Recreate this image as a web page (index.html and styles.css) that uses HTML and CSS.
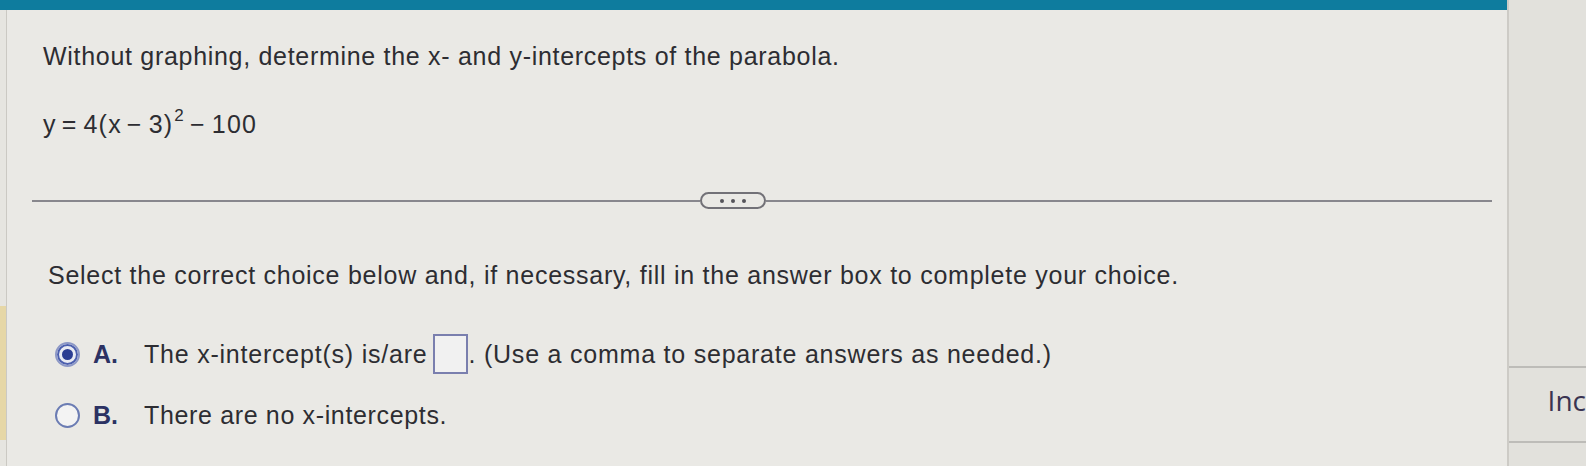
FILE: index.html
```html
<!DOCTYPE html>
<html>
<head>
<meta charset="utf-8">
<link rel="stylesheet" href="styles.css">
</head>
<body>
<div class="screen">
  <div class="maincol">
    <div class="topbar"></div>
    <div class="mainrow">
      <div class="leftstrip"><div class="strip-mark"></div></div>
      <div class="panel">
        <p class="title">Without graphing, determine the x- and y-intercepts of the parabola.</p>
        <p class="equation">y<span class="op">=</span>4(x<span class="op">−</span>3)<sup class="sup">2</sup><span class="op">−</span>100</p>
        <div class="separator">
          <div class="rule"></div>
          <div class="pill"><span class="dot"></span><span class="dot"></span><span class="dot"></span></div>
          <div class="rule rule-right"></div>
        </div>
        <p class="instruction">Select the correct choice below and, if necessary, fill in the answer box to complete your choice.</p>
        <div class="choice choice-a">
          <span class="radio radio-on"><span class="radio-dot"></span></span>
          <span class="label">A.</span>
          <span class="text">The x-intercept(s) is/are</span>
          <span class="answer-box"></span>
          <span class="text">. (Use a comma to separate answers as needed.)</span>
        </div>
        <div class="choice choice-b">
          <span class="radio"></span>
          <span class="label">B.</span>
          <span class="text">There are no x-intercepts.</span>
        </div>
      </div>
    </div>
  </div>
  <div class="sidecol">
    <div class="side-top"></div>
    <div class="side-item">Inc</div>
    <div class="side-bottom"></div>
  </div>
</div>
</body>
</html>
```

FILE: styles.css
```css
* { box-sizing: border-box; }
html, body {
  margin: 0;
  padding: 0;
  width: 1586px;
  height: 466px;
  overflow: hidden;
  background: #e3e2dd;
  font-family: "Liberation Sans", Arial, sans-serif;
  color: #2d2d32;
}
.screen {
  display: flex;
  width: 1586px;
  height: 466px;
}
.maincol {
  width: 1512px;
  display: flex;
  flex-direction: column;
}
.topbar {
  height: 10px;
  background: #0e7c9e;
}
.mainrow {
  flex: 1;
  display: flex;
}
.leftstrip {
  width: 7px;
  background: #e6e5e0;
  border-right: 1px solid #cbc9c3;
  padding-top: 296px;
}
.strip-mark {
  height: 134px;
  background: #e6d7a6;
}
.panel {
  flex: 1;
  background: #eae9e5;
  padding: 32px 0 0 36px;
}
.title, .equation, .instruction {
  margin: 0;
  font-size: 25px;
  line-height: 28px;
  letter-spacing: 0.7px;
}
.equation {
  margin-top: 40px;
  letter-spacing: 1.2px;
}
.op { padding: 0 6px 0 5px; }
.sup {
  font-size: 17px;
  vertical-align: 0;
  position: relative;
  top: -12px;
  line-height: 0;
  padding-left: 1px;
}
.separator {
  margin: 54px 0 0 -11px;
  width: 1460px;
  height: 17px;
  display: flex;
  align-items: center;
}
.rule {
  width: 668px;
  height: 2px;
  background: #88878d;
}
.rule-right { flex: 1; }
.pill {
  width: 66px;
  height: 17px;
  border: 2.5px solid #727177;
  border-radius: 9px;
  display: flex;
  align-items: center;
  justify-content: center;
  gap: 7px;
}
.dot {
  width: 4px;
  height: 4px;
  background: #55545a;
  border-radius: 50%;
}
.instruction {
  margin-top: 52px;
  padding-left: 5px;
  letter-spacing: 0.74px;
}
.choice {
  display: flex;
  align-items: center;
  font-size: 25px;
  line-height: 28px;
  letter-spacing: 0.78px;
  padding-left: 12px;
}
.choice-a {
  margin-top: 45px;
  height: 40px;
}
.choice-b {
  margin-top: 27px;
}
.radio {
  width: 25px;
  height: 25px;
  border-radius: 50%;
  border: 2.5px solid #6b7cb3;
  background: #f3f3f3;
  display: flex;
  align-items: center;
  justify-content: center;
  margin-right: 13px;
  flex: none;
}
.radio-on {
  border: 2px solid #8d98c6;
  background: #e9ebf3;
  box-shadow: inset 0 0 0 2px #4c5fae;
}
.radio-dot {
  width: 11px;
  height: 11px;
  border-radius: 50%;
  background: #2b3d93;
}
.label {
  width: 51px;
  font-weight: bold;
  color: #2c3263;
  letter-spacing: 0;
  flex: none;
}
.text { white-space: nowrap; }
.choice-b .text { letter-spacing: 0.65px; }
.answer-box {
  width: 35px;
  height: 40px;
  border: 2px solid #7a7fae;
  background: #f1f1f1;
  margin-left: 6px;
  flex: none;
}
.sidecol {
  flex: 1;
  background: #e2e1dc;
  border-left: 2px solid #cdcbc6;
  display: flex;
  flex-direction: column;
}
.side-top {
  height: 368px;
  border-bottom: 2px solid #bdbcb8;
}
.side-item {
  height: 75px;
  padding: 12px 0 0 39px;
  font-family: "Open Sans", sans-serif;
  font-size: 28px;
  line-height: 40px;
  color: #3a3452;
  white-space: nowrap;
  overflow: hidden;
  border-bottom: 2px solid #bdbcb8;
}
.side-bottom { flex: 1; }
```
